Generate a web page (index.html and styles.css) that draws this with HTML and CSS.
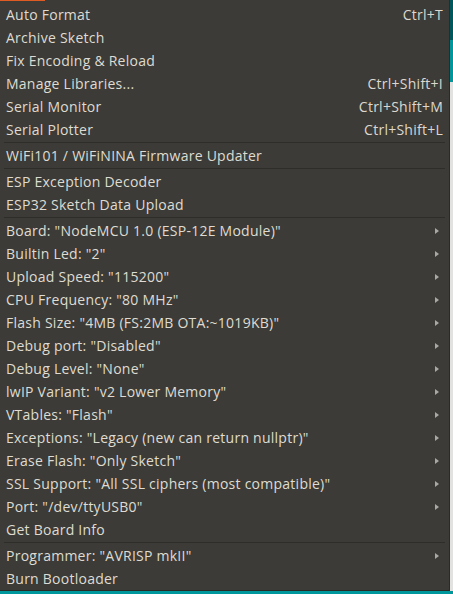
FILE: index.html
```html
<!DOCTYPE html>
<html>
<head>
<meta charset="utf-8">
<link rel="stylesheet" href="styles.css">
</head>
<body>
<div class="screen">
  <div class="main">
    <div class="menu">
      <div class="topbar"><span class="active"></span></div>
      <div class="item"><span class="label">Auto Format</span><span class="key">Ctrl+T</span></div>
      <div class="item"><span class="label">Archive Sketch</span></div>
      <div class="item"><span class="label">Fix Encoding &amp; Reload</span></div>
      <div class="item"><span class="label">Manage Libraries...</span><span class="key">Ctrl+Shift+I</span></div>
      <div class="item"><span class="label">Serial Monitor</span><span class="key">Ctrl+Shift+M</span></div>
      <div class="item"><span class="label">Serial Plotter</span><span class="key">Ctrl+Shift+L</span></div>
      <div class="sep"></div>
      <div class="item"><span class="label">WiFi101 / WiFiNINA Firmware Updater</span></div>
      <div class="sep"></div>
      <div class="item"><span class="label">ESP Exception Decoder</span></div>
      <div class="item"><span class="label">ESP32 Sketch Data Upload</span></div>
      <div class="sep"></div>
      <div class="item sub"><span class="label">Board: "NodeMCU 1.0 (ESP-12E Module)"</span><span class="arrow"></span></div>
      <div class="item sub"><span class="label">Builtin Led: "2"</span><span class="arrow"></span></div>
      <div class="item sub"><span class="label">Upload Speed: "115200"</span><span class="arrow"></span></div>
      <div class="item sub"><span class="label">CPU Frequency: "80 MHz"</span><span class="arrow"></span></div>
      <div class="item sub"><span class="label">Flash Size: "4MB (FS:2MB OTA:~1019KB)"</span><span class="arrow"></span></div>
      <div class="item sub"><span class="label">Debug port: "Disabled"</span><span class="arrow"></span></div>
      <div class="item sub"><span class="label">Debug Level: "None"</span><span class="arrow"></span></div>
      <div class="item sub"><span class="label">lwIP Variant: "v2 Lower Memory"</span><span class="arrow"></span></div>
      <div class="item sub"><span class="label">VTables: "Flash"</span><span class="arrow"></span></div>
      <div class="item sub"><span class="label">Exceptions: "Legacy (new can return nullptr)"</span><span class="arrow"></span></div>
      <div class="item sub"><span class="label">Erase Flash: "Only Sketch"</span><span class="arrow"></span></div>
      <div class="item sub"><span class="label">SSL Support: "All SSL ciphers (most compatible)"</span><span class="arrow"></span></div>
      <div class="item sub"><span class="label">Port: "/dev/ttyUSB0"</span><span class="arrow"></span></div>
      <div class="item"><span class="label">Get Board Info</span></div>
      <div class="sep"></div>
      <div class="item sub"><span class="label">Programmer: "AVRISP mkII"</span><span class="arrow"></span></div>
      <div class="item"><span class="label">Burn Bootloader</span></div>
    </div>
    <div class="side">
      <div class="side-dark"></div>
      <div class="side-teal"></div>
      <div class="side-gray"></div>
    </div>
  </div>
  <div class="footer"></div>
</div>
</body>
</html>
```
FILE: styles.css
```css
html, body {
  margin: 0;
  padding: 0;
  background: #3c3b37;
}
.screen {
  width: 453px;
  height: 594px;
  display: flex;
  flex-direction: column;
  overflow: hidden;
}
.main {
  display: flex;
  flex: 1;
  min-height: 0;
}
.menu {
  width: 449px;
  background: #3c3b37;
  border-right: 1px solid #2b2a27;
  border-bottom: 1px solid #2b2a27;
  display: flex;
  flex-direction: column;
  font-family: "Open Sans", "Noto Sans", sans-serif;
  font-size: 14px;
  letter-spacing: 0.25px;
  color: #dfdbd2;
}
.topbar {
  height: 3px;
  display: flex;
}
.topbar .active {
  width: 45px;
  height: 1px;
  background: #e05a23;
}
.item {
  height: 23px;
  line-height: 23px;
  display: flex;
  align-items: center;
  justify-content: space-between;
  padding: 0 6px 0 6px;
  white-space: nowrap;
}
.key {
  color: #dcd8cf;
}
.arrow {
  width: 0;
  height: 0;
  border-top: 3.5px solid transparent;
  border-bottom: 3.5px solid transparent;
  border-left: 4px solid #a9a8a4;
  margin-right: 4px;
}
.sep {
  height: 1px;
  margin: 1px 4px;
  background: #2e2d2a;
}
.side {
  width: 3px;
  display: flex;
  flex-direction: column;
}
.side-dark {
  height: 40px;
  background: #00585c;
}
.side-teal {
  height: 42px;
  background: #00979c;
}
.side-gray {
  flex: 1;
  background: #e2e2e0;
}
.footer {
  height: 3px;
  background: #00979c;
}
```
